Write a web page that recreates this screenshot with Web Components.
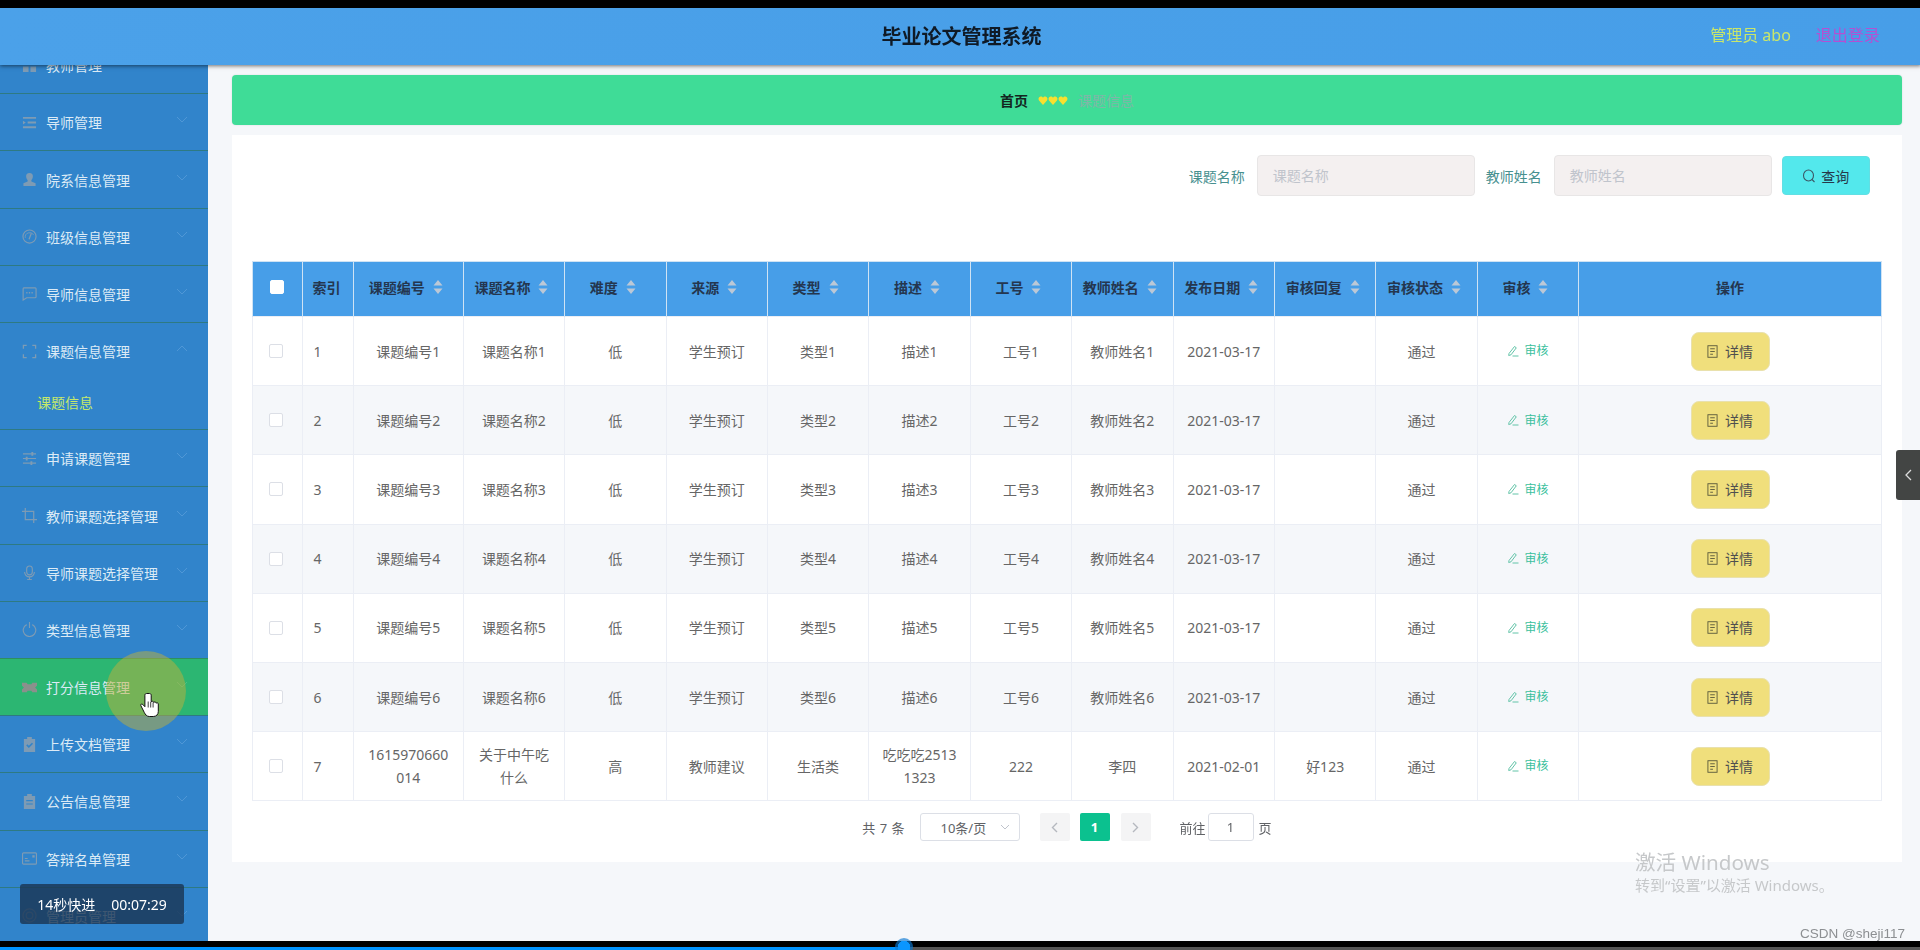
<!DOCTYPE html>
<html lang="zh">
<head>
<meta charset="utf-8">
<title>毕业论文管理系统</title>
<style>
  html, body { margin: 0; height: 100%; background: #000; overflow: hidden; }
  body { font-family: "Noto Sans", "Noto Sans CJK SC", sans-serif; font-size: 14px; }
</style>
</head>
<body>
<app-shell>
  <top-bar slot="header" title="毕业论文管理系统" user="管理员 abo" logout="退出登录"></top-bar>
  <side-menu slot="side">
    <menu-item icon="grid" label="教师管理"></menu-item>
    <menu-item icon="list" label="导师管理"></menu-item>
    <menu-item icon="user" label="院系信息管理"></menu-item>
    <menu-item icon="gauge" label="班级信息管理"></menu-item>
    <menu-item icon="chat" label="导师信息管理"></menu-item>
    <menu-item icon="corners" label="课题信息管理" open><span>课题信息</span></menu-item>
    <menu-item icon="sliders" label="申请课题管理"></menu-item>
    <menu-item icon="crop" label="教师课题选择管理"></menu-item>
    <menu-item icon="mic" label="导师课题选择管理"></menu-item>
    <menu-item icon="power" label="类型信息管理"></menu-item>
    <menu-item icon="ticket" label="打分信息管理" hover></menu-item>
    <menu-item icon="check" label="上传文档管理"></menu-item>
    <menu-item icon="board" label="公告信息管理"></menu-item>
    <menu-item icon="card" label="答辩名单管理"></menu-item>
    <menu-item icon="ring" label="管理员管理"></menu-item>
  </side-menu>
  <crumb-bar slot="main" home="首页" current="课题信息"></crumb-bar>
  <content-card slot="main">
    <search-bar></search-bar>
    <data-table></data-table>
    <page-nav></page-nav>
  </content-card>
  <video-bar slot="footer"></video-bar>
</app-shell>
<click-mark></click-mark>
<video-tip></video-tip>
<drawer-tab></drawer-tab>
<win-mark></win-mark>

<script>
const ICONS = {
  grid: '<path fill="currentColor" d="M1 1h6v6H1zM9 1h6v6H9zM1 9h6v6H1zM9 9h6v6H9z"/>',
  list: '<path fill="none" stroke="currentColor" stroke-width="2" d="M1 3h14M6 8h9M1 13h14"/><path fill="currentColor" d="M1 6l3 2-3 2z"/>',
  user: '<path fill="currentColor" d="M8 1a3.6 3.6 0 0 1 3.6 3.8c0 1.700-.8 3-1.600 3.800v1.400l4.500 2v3H1.500v-3l4.500-2V8.600C5.200 7.800 4.400 6.500 4.400 4.800A3.600 3.600 0 0 1 8 1z"/>',
  gauge: '<circle cx="8" cy="8" r="7" fill="none" stroke="currentColor" stroke-width="1.200"/><path fill="none" stroke="currentColor" stroke-width=".9" d="M3.500 9.500a4.800 4.800 0 0 1 9-3"/><path fill="none" stroke="currentColor" stroke-width="1.300" d="M10 4.500L7.500 11"/>',
  chat: '<path fill="none" stroke="currentColor" stroke-width="1.200" d="M2 2h12a1 1 0 0 1 1 1v8.500a1 1 0 0 1-1 1H5L1.200 15V3A1 1 0 0 1 2 2z"/><path fill="currentColor" d="M4.500 6.500h1.400v1.400H4.500zM7.300 6.500h1.400v1.400H7.300zM10.100 6.500h1.400v1.400h-1.400z"/>',
  corners: '<path fill="none" stroke="currentColor" stroke-width="1.400" d="M5 1.500H1.500V5M11 1.500h3.500V5M5 14.500H1.500V11M11 14.500h3.500V11"/>',
  sliders: '<path fill="none" stroke="currentColor" stroke-width="1.300" d="M1 3h14M1 8h14M1 13h14"/><path fill="currentColor" d="M10 1h2v4h-2zM4 6h2v4H4zM9 11h2v4H9z"/>',
  crop: '<path fill="none" stroke="currentColor" stroke-width="1.300" d="M3.500 0v12.500H16M0 3.500h12.500V16"/>',
  mic: '<rect x="5" y="1" width="6" height="9.500" rx="3" fill="none" stroke="currentColor" stroke-width="1.200"/><path fill="none" stroke="currentColor" stroke-width="1.200" d="M2.800 7.500a5.200 5.200 0 0 0 10.400 0M8 13v2.500M5.500 15.500h5"/>',
  power: '<path fill="none" stroke="currentColor" stroke-width="1.200" d="M5 2.800a6.700 6.700 0 1 0 6 0M8 0v6.500"/>',
  ticket: '<path fill="currentColor" d="M0 3h5l1 1.500h4L11 3h5v3l-2 2 2 2v3h-5l-1-1.500H6L5 13H0v-3l2-2-2-2z"/>',
  check: '<path fill="currentColor" fill-rule="evenodd" d="M5.500 0h5v2H14v14H2V2h3.500zM4.500 9l1.200-1.200 1.600 1.600 3.300-3.400 1.200 1.200-4.500 4.600z"/>',
  board: '<path fill="currentColor" fill-rule="evenodd" d="M5.500 0h5v2H14v14H2V2h3.500zM4.500 6.500v1.300h7V6.500zM4.500 10v1.300h7V10z"/>',
  card: '<rect x=".6" y="2" width="14.800" height="12" rx="1" fill="none" stroke="currentColor" stroke-width="1.200"/><path fill="none" stroke="currentColor" stroke-width="1.200" d="M3 10.500h5M3 8h3"/><path fill="currentColor" d="M11 4.500h2.500V7H11z"/>',
  ring: '<circle cx="8" cy="8" r="7" fill="none" stroke="currentColor" stroke-width="1.300"/><circle cx="8" cy="8" r="3.500" fill="none" stroke="currentColor" stroke-width="1.300"/>'
}

class AppShell extends HTMLElement{
  constructor(){
    super()
    this.attachShadow({mode: 'open'})
  }
  connectedCallback(){
    this.shadowRoot.innerHTML = `
      <style>
        :host{
          display: grid;
          grid-template-columns: 208px 1fr;
          grid-template-rows: 57px 876px 9px;
          width: 1920px;
          height: 950px;
          padding-top: 8px;
          box-sizing: border-box;
          filter: blur(.4px);
        }
        .header{ grid-column: 1 / 3; z-index: 5; display: block; }
        .side{ overflow: hidden; background: #3184cb; }
        .main{
          background: #f5f7fa;
          padding: 10px 19px 0 24px;
          display: flex;
          flex-direction: column;
          gap: 10px;
        }
        .footer{ grid-column: 1 / 3; }
      </style>
      <div class="header"><slot name="header"></slot></div>
      <div class="side"><slot name="side"></slot></div>
      <div class="main"><slot name="main"></slot></div>
      <div class="footer"><slot name="footer"></slot></div>
    `
  }
}
customElements.define('app-shell', AppShell)

class TopBar extends HTMLElement{
  constructor(){
    super()
    this.attachShadow({mode: 'open'})
  }
  connectedCallback(){
    this.shadowRoot.innerHTML = `
      <style>
        :host{
          display: grid;
          grid-template-columns: 1fr auto 1fr;
          align-items: center;
          height: 57px;
          background: linear-gradient(100deg, #4ba1e9, #479ee8);
          box-shadow: 0 1px 4px rgba(0,0,0,.55);
        }
        h1{
          grid-column: 2;
          margin: -1px 0 0 2px;
          font-size: 20px;
          line-height: 57px;
          font-weight: 700;
          color: #0f1a26;
        }
        .right{
          grid-column: 3;
          display: flex;
          justify-content: flex-end;
          gap: 25px;
          padding-right: 41px;
          font-size: 16px;
          margin-top: -5px;
        }
        .user{ color: #c9e66a; }
        .out{ color: #b450d2; }
      </style>
      <h1>${this.getAttribute('title')}</h1>
      <div class="right">
        <span class="user">${this.getAttribute('user')}</span>
        <span class="out">${this.getAttribute('logout')}</span>
      </div>
    `
  }
}
customElements.define('top-bar', TopBar)

class SideMenu extends HTMLElement{
  constructor(){
    super()
    this.attachShadow({mode: 'open'})
  }
  connectedCallback(){
    this.shadowRoot.innerHTML = `
      <style>
        :host{ display: block; margin-top: -27.900px; }
      </style>
      <slot></slot>
    `
  }
}
customElements.define('side-menu', SideMenu)

class MenuItem extends HTMLElement{
  constructor(){
    super()
    this.attachShadow({mode: 'open'})
  }
  connectedCallback(){
    const open = this.hasAttribute('open')
    const chevron = open ? 'M2 7l5-5 5 5' : 'M2 2l5 5 5-5'
    this.shadowRoot.innerHTML = `
      <style>
        :host{
          display: block;
          border-bottom: 1px solid #2e7a82;
          box-sizing: border-box;
          color: #dcebf6;
          font-size: 14px;
        }
        :host([hover]){ background: #2cb672; border-top: 1px solid #2f8f5e; margin-top: -1px; }
        .row{
          display: flex;
          align-items: center;
          height: 56.200px;
          padding-left: 22px;
        }
        svg.icon{ width: 15px; height: 15px; color: #7e9bb4; flex: none; }
        :host([hover]) svg.icon{ color: #8b908c; }
        .label{ margin-left: 9px; flex: 1; }
        svg.arrow{
          width: 14px;
          height: 9px;
          margin: 0 19px 5px 0;
          fill: none;
          stroke: #4f97d6;
          stroke-width: 1;
        }
        :host([hover]) svg.arrow{ stroke: #4cc086; }
        .sub{
          display: block;
          height: 50px;
          padding: 6px 0 0 37px;
          box-sizing: border-box;
          line-height: 36px;
          color: #c6e96a;
        }
      </style>
      <div class="row">
        <svg class="icon" viewBox="0 0 16 16">${ICONS[this.getAttribute('icon')]}</svg>
        <span class="label">${this.getAttribute('label')}</span>
        <svg class="arrow" viewBox="0 0 14 9"><path d="${chevron}"/></svg>
      </div>
      ${open ? '<div class="sub"><slot></slot></div>' : ''}
    `
  }
}
customElements.define('menu-item', MenuItem)

class CrumbBar extends HTMLElement{
  constructor(){
    super()
    this.attachShadow({mode: 'open'})
  }
  connectedCallback(){
    const heart = '<path d="M5 9L1 4.500C-.2 2.500 1 .5 2.800.5 3.800.5 4.600 1 5 1.800 5.400 1 6.200.5 7.200.5 9 .5 10.200 2.500 9 4.500z"/>'
    this.shadowRoot.innerHTML = `
      <style>
        :host{
          display: flex;
          justify-content: center;
          align-items: center;
          height: 50px;
          background: #3fdc97;
          border-radius: 4px;
          font-size: 14px;
          gap: 10px;
          box-shadow: 0 0 2px rgba(0,0,0,.12);
        }
        .home{ color: #13261f; font-weight: 700; font-size: 14px; }
        .hearts{ display: flex; }
        .hearts svg{ width: 10px; height: 9px; fill: #f8e02e; }
        .current{ color: #7fb6a8; }
      </style>
      <span class="home">${this.getAttribute('home')}</span>
      <span class="hearts">
        <svg viewBox="0 0 10 9">${heart}</svg><svg viewBox="0 0 10 9">${heart}</svg><svg viewBox="0 0 10 9">${heart}</svg>
      </span>
      <span class="current">${this.getAttribute('current')}</span>
    `
  }
}
customElements.define('crumb-bar', CrumbBar)

class ContentCard extends HTMLElement{
  constructor(){
    super()
    this.attachShadow({mode: 'open'})
  }
  connectedCallback(){
    this.shadowRoot.innerHTML = `
      <style>
        :host{
          display: block;
          height: 727px;
          padding: 20px 20px 0 20px;
          box-sizing: border-box;
          background: #fff;
        }
      </style>
      <slot></slot>
    `
  }
}
customElements.define('content-card', ContentCard)

class SearchBar extends HTMLElement{
  constructor(){
    super()
    this.attachShadow({mode: 'open'})
  }
  connectedCallback(){
    this.shadowRoot.innerHTML = `
      <style>
        :host{
          display: flex;
          justify-content: flex-end;
          align-items: center;
          height: 41px;
          margin: 0 12px 65px 0;
          font-size: 14px;
        }
        label{ color: #47908f; margin-right: 12px; }
        .field{
          width: 218px;
          height: 41px;
          margin-right: 11px;
          padding-left: 15px;
          box-sizing: border-box;
          background: #f4f0f0;
          border: 1px solid #e8e6e6;
          border-radius: 4px;
          line-height: 39px;
          color: #c0c4cc;
        }
        .field.last{ margin-right: 10px; }
        button{
          display: flex;
          align-items: center;
          justify-content: center;
          gap: 5px;
          width: 88px;
          height: 39px;
          padding: 0;
          background: #53e8ec;
          border: 1px solid #62dfe3;
          border-radius: 4px;
          font: inherit;
          color: #26384a;
        }
        svg{ width: 14px; height: 14px; fill: none; stroke: #3c5866; stroke-width: 1.100; }
      </style>
      <label>课题名称</label>
      <div class="field">课题名称</div>
      <label>教师姓名</label>
      <div class="field last">教师姓名</div>
      <button>
        <svg viewBox="0 0 14 14"><ellipse cx="6.500" cy="6.500" rx="5" ry="5.500"/><path d="M10 10.500l2.500 2.500"/></svg>
        查询
      </button>
    `
  }
}
customElements.define('search-bar', SearchBar)

class DataTable extends HTMLElement{
  constructor(){
    super()
    this.attachShadow({mode: 'open'})
    this.heads = ['课题编号','课题名称','难度','来源','类型','描述','工号','教师姓名','发布日期','审核回复','审核状态','审核']
    this.rows = []
    for(let i = 1; i <= 6; i++){
      this.rows.push([`课题编号${i}`,`课题名称${i}`,'低','学生预订',`类型${i}`,`描述${i}`,`工号${i}`,`教师姓名${i}`,'2021-03-17','','通过'])
    }
    this.rows.push(['1615970660014','关于中午吃什么','高','教师建议','生活类','吃吃吃25131323','222','李四','2021-02-01','好123','通过'])
  }

  connectedCallback(){
    const cols = [49.500, 51.200, 110, ...Array(11).fill(101.420), 302.700]
    const caret = '<svg class="caret" viewBox="0 0 10 14"><path d="M5 0l4.500 5.500h-9zM5 14l-4.500-5.500h9z"/></svg>'
    const pen = '<svg class="pen" viewBox="0 0 12 12"><path d="M2 8.500L7.500 1.500l1.800 1.300L4 9.800 1.700 10.500zM5.500 11h6"/></svg>'
    const doc = '<svg class="doc" viewBox="0 0 12 14"><rect x="1" y=".7" width="10" height="12.600"/><path d="M3.500 4h5M3.500 7h5M3.500 10h3"/></svg>'
    const body = this.rows.map((row, i) => `
      <tr>
        <td class="pick"><i class="box"></i></td>
        <td class="idx">${i + 1}</td>
        ${row.map((c, n) => `<td${n === 10 ? ' class="state"' : ''}>${c}</td>`).join('')}
        <td><a>${pen}审核</a></td>
        <td><button>${doc}详情</button></td>
      </tr>`).join('')
    this.shadowRoot.innerHTML = `
      <style>
        :host{ display: block; font-size: 14px; color: #666; }
        table{ border-collapse: collapse; table-layout: fixed; width: 1629px; }
        th{
          height: 55px;
          padding: 0 0 4px;
          box-sizing: border-box;
          background: #479ee8;
          border: 1px solid #cfe3f4;
          border-bottom: 0;
          color: #24364f;
          font-weight: 700;
          font-size: 14px;
        }
        th .in{ display: inline-flex; align-items: center; gap: 8px; margin-right: 5px; }
        th.idx{ text-align: left; padding-left: 10px; }
        .caret{ width: 10px; height: 14px; fill: #bcc8d6; }
        td{
          height: 69.200px;
          box-sizing: border-box;
          padding: 0 12px;
          text-align: center;
          border: 1px solid #ebeef5;
          line-height: 23px;
          word-break: break-all;
        }
        tr:nth-child(even) td{ background: #f5f7fa; }
        td.idx{ text-align: left; padding-left: 11px; }
        td.state{ padding-right: 22px; }
        td.pick{ padding: 0 0 0 4px; }
        .box{
          display: block;
          width: 14px;
          height: 14px;
          margin: auto;
          margin-left: 12px;
          box-sizing: border-box;
          background: #fff;
          border: 1px solid #dcdfe6;
          border-radius: 2px;
        }
        th .box{ margin: auto; border-color: #fff; }
        a{ display: inline-flex; align-items: center; gap: 5px; font-size: 12px; color: #3bbf9d; }
        .pen{ width: 12px; height: 12px; fill: none; stroke: #62c4a8; stroke-width: 1; }
        button{
          display: inline-flex;
          align-items: center;
          justify-content: center;
          gap: 7px;
          width: 79px;
          height: 39px;
          padding: 0;
          vertical-align: middle;
          background: #f0df7c;
          border: 1px solid #e9e1ad;
          border-radius: 8px;
          font: inherit;
          color: #4f4f4f;
        }
        .doc{ width: 11px; height: 13px; fill: none; stroke: #5b5a3c; stroke-width: 1; }
      </style>
      <table>
        <colgroup>${cols.map(w => `<col style="width:${w}px">`).join('')}</colgroup>
        <thead>
          <tr>
            <th><i class="box"></i></th>
            <th class="idx">索引</th>
            ${this.heads.map(h => `<th><span class="in">${h}${caret}</span></th>`).join('')}
            <th>操作</th>
          </tr>
        </thead>
        <tbody>${body}</tbody>
      </table>
    `
  }
}
customElements.define('data-table', DataTable)

class PageNav extends HTMLElement{
  constructor(){
    super()
    this.attachShadow({mode: 'open'})
  }
  connectedCallback(){
    this.shadowRoot.innerHTML = `
      <style>
        :host{
          display: flex;
          justify-content: center;
          align-items: center;
          height: 28px;
          margin-top: 12px;
          font-size: 13px;
          color: #606266;
        }
        .total{ word-spacing: 1px; }
        .select{
          display: flex;
          align-items: center;
          justify-content: space-between;
          width: 100px;
          height: 28px;
          margin: 0 20px 0 15px;
          padding: 0 9px 0 20px;
          box-sizing: border-box;
          border: 1px solid #dcdfe6;
          border-radius: 3px;
        }
        .select svg{ width: 10px; height: 6px; fill: none; stroke: #c0c4cc; }
        .btn{
          display: flex;
          align-items: center;
          justify-content: center;
          width: 30px;
          height: 28px;
          background: #f4f4f5;
          border-radius: 2px;
        }
        .btn svg{ width: 7px; height: 11px; fill: none; stroke: #b5b8bf; stroke-width: 1.400; }
        .now{ margin: 0 11px 0 10px; background: #0bc18f; color: #fff; font-weight: 700; }
        .go{ margin-left: 29px; }
        .num{
          width: 46px;
          height: 28px;
          margin: 0 5px 0 2px;
          box-sizing: border-box;
          border: 1px solid #dcdfe6;
          border-radius: 3px;
          text-align: center;
          line-height: 26px;
        }
      </style>
      <span class="total">共 7 条</span>
      <div class="select"><span>10条/页</span><svg viewBox="0 0 10 6"><path d="M1 1l4 4 4-4"/></svg></div>
      <div class="btn"><svg viewBox="0 0 7 11"><path d="M6 1L1.500 5.500 6 10"/></svg></div>
      <div class="btn now">1</div>
      <div class="btn"><svg viewBox="0 0 7 11"><path d="M1 1l4.500 4.500L1 10"/></svg></div>
      <span class="go">前往</span>
      <div class="num">1</div>
      <span>页</span>
    `
  }
}
customElements.define('page-nav', PageNav)

class VideoBar extends HTMLElement{
  constructor(){
    super()
    this.attachShadow({mode: 'open'})
  }
  connectedCallback(){
    this.shadowRoot.innerHTML = `
      <style>
        :host{ display: block; height: 9px; background: #000; position: relative; }
        .track{
          position: absolute;
          left: 0;
          right: 0;
          bottom: 0;
          height: 3px;
          background: linear-gradient(90deg, #0094ff 904px, #555 904px);
        }
        .dot{
          position: absolute;
          left: 895px;
          top: -3px;
          width: 18px;
          height: 18px;
          border-radius: 50%;
          background: radial-gradient(circle, #0a96ff 0 6px, rgba(10,120,210,.65) 6.500px 9px);
        }
      </style>
      <div class="track"></div>
      <div class="dot"></div>
    `
  }
}
customElements.define('video-bar', VideoBar)

// mouse highlight on top of the sidebar
class ClickMark extends HTMLElement{
  constructor(){
    super()
    this.attachShadow({mode: 'open'})
  }
  connectedCallback(){
    this.shadowRoot.innerHTML = `
      <style>
        :host{
          position: absolute;
          left: 106px;
          top: 651px;
          width: 80px;
          height: 80px;
          border-radius: 50%;
          background: rgba(190,175,60,.5);
          z-index: 6;
        }
        svg{ position: absolute; left: 34px; top: 41px; width: 20px; height: 26px; }
      </style>
      <svg viewBox="0 0 20 26">
        <path fill="#fff" stroke="#111" stroke-width="1" d="M6.500 1.500c-1 0-1.600.7-1.600 1.700v11.500L2.800 12.500c-1-1-2.400-.3-2 1l3.500 7c1 2 2.500 4 5 4h4c3 0 5-2 5-5v-7.500c0-1.200-1.500-1.600-2.200-.8 0-1.300-1.700-1.700-2.400-.7 0-1.300-1.800-1.700-2.500-.6V3.200c0-1-.7-1.700-1.700-1.700z"/>
        <path fill="none" stroke="#111" stroke-width=".8" d="M8.200 9.500v6M10.700 10v5.500M13.100 10.500v5"/>
      </svg>
    `
  }
}
customElements.define('click-mark', ClickMark)

class VideoTip extends HTMLElement{
  constructor(){
    super()
    this.attachShadow({mode: 'open'})
  }
  connectedCallback(){
    this.shadowRoot.innerHTML = `
      <style>
        :host{
          position: absolute;
          left: 20px;
          top: 884px;
          width: 164px;
          height: 40px;
          display: flex;
          justify-content: center;
          align-items: center;
          gap: 16px;
          background: rgba(27,54,84,.82);
          border-radius: 3px;
          color: #fff;
          font-size: 14px;
          z-index: 6;
        }
      </style>
      <span>14秒快进</span>
      <span>00:07:29</span>
    `
  }
}
customElements.define('video-tip', VideoTip)

class DrawerTab extends HTMLElement{
  constructor(){
    super()
    this.attachShadow({mode: 'open'})
  }
  connectedCallback(){
    this.shadowRoot.innerHTML = `
      <style>
        :host{
          position: absolute;
          left: 1896px;
          top: 450px;
          width: 24px;
          height: 50px;
          display: flex;
          align-items: center;
          justify-content: center;
          background: #434544;
          border-radius: 3px 0 0 3px;
          z-index: 6;
        }
        svg{ width: 8px; height: 12px; fill: none; stroke: #dcdcdc; stroke-width: 1.300; }
      </style>
      <svg viewBox="0 0 8 12"><path d="M7 1L2 6l5 5"/></svg>
    `
  }
}
customElements.define('drawer-tab', DrawerTab)

class WinMark extends HTMLElement{
  constructor(){
    super()
    this.attachShadow({mode: 'open'})
  }
  connectedCallback(){
    this.shadowRoot.innerHTML = `
      <style>
        :host{
          position: absolute;
          left: 1635px;
          top: 848px;
          width: 280px;
          height: 93px;
          color: #c6c8ca;
          font-family: "Noto Sans", "Noto Sans CJK SC", sans-serif;
          z-index: 6;
        }
        .a{ font-size: 20.600px; line-height: 28px; }
        .b{ font-size: 15px; line-height: 20px; margin-top: -1px; white-space: nowrap; }
        .c{
          position: absolute;
          right: 10px;
          bottom: -1px;
          font-family: "Liberation Sans", sans-serif;
          font-size: 13.500px;
          line-height: 16px;
          color: #8c8f92;
        }
      </style>
      <div class="a">激活 Windows</div>
      <div class="b">转到“设置”以激活 Windows。</div>
      <div class="c">CSDN @sheji117</div>
    `
  }
}
customElements.define('win-mark', WinMark)
</script>
</body>
</html>
